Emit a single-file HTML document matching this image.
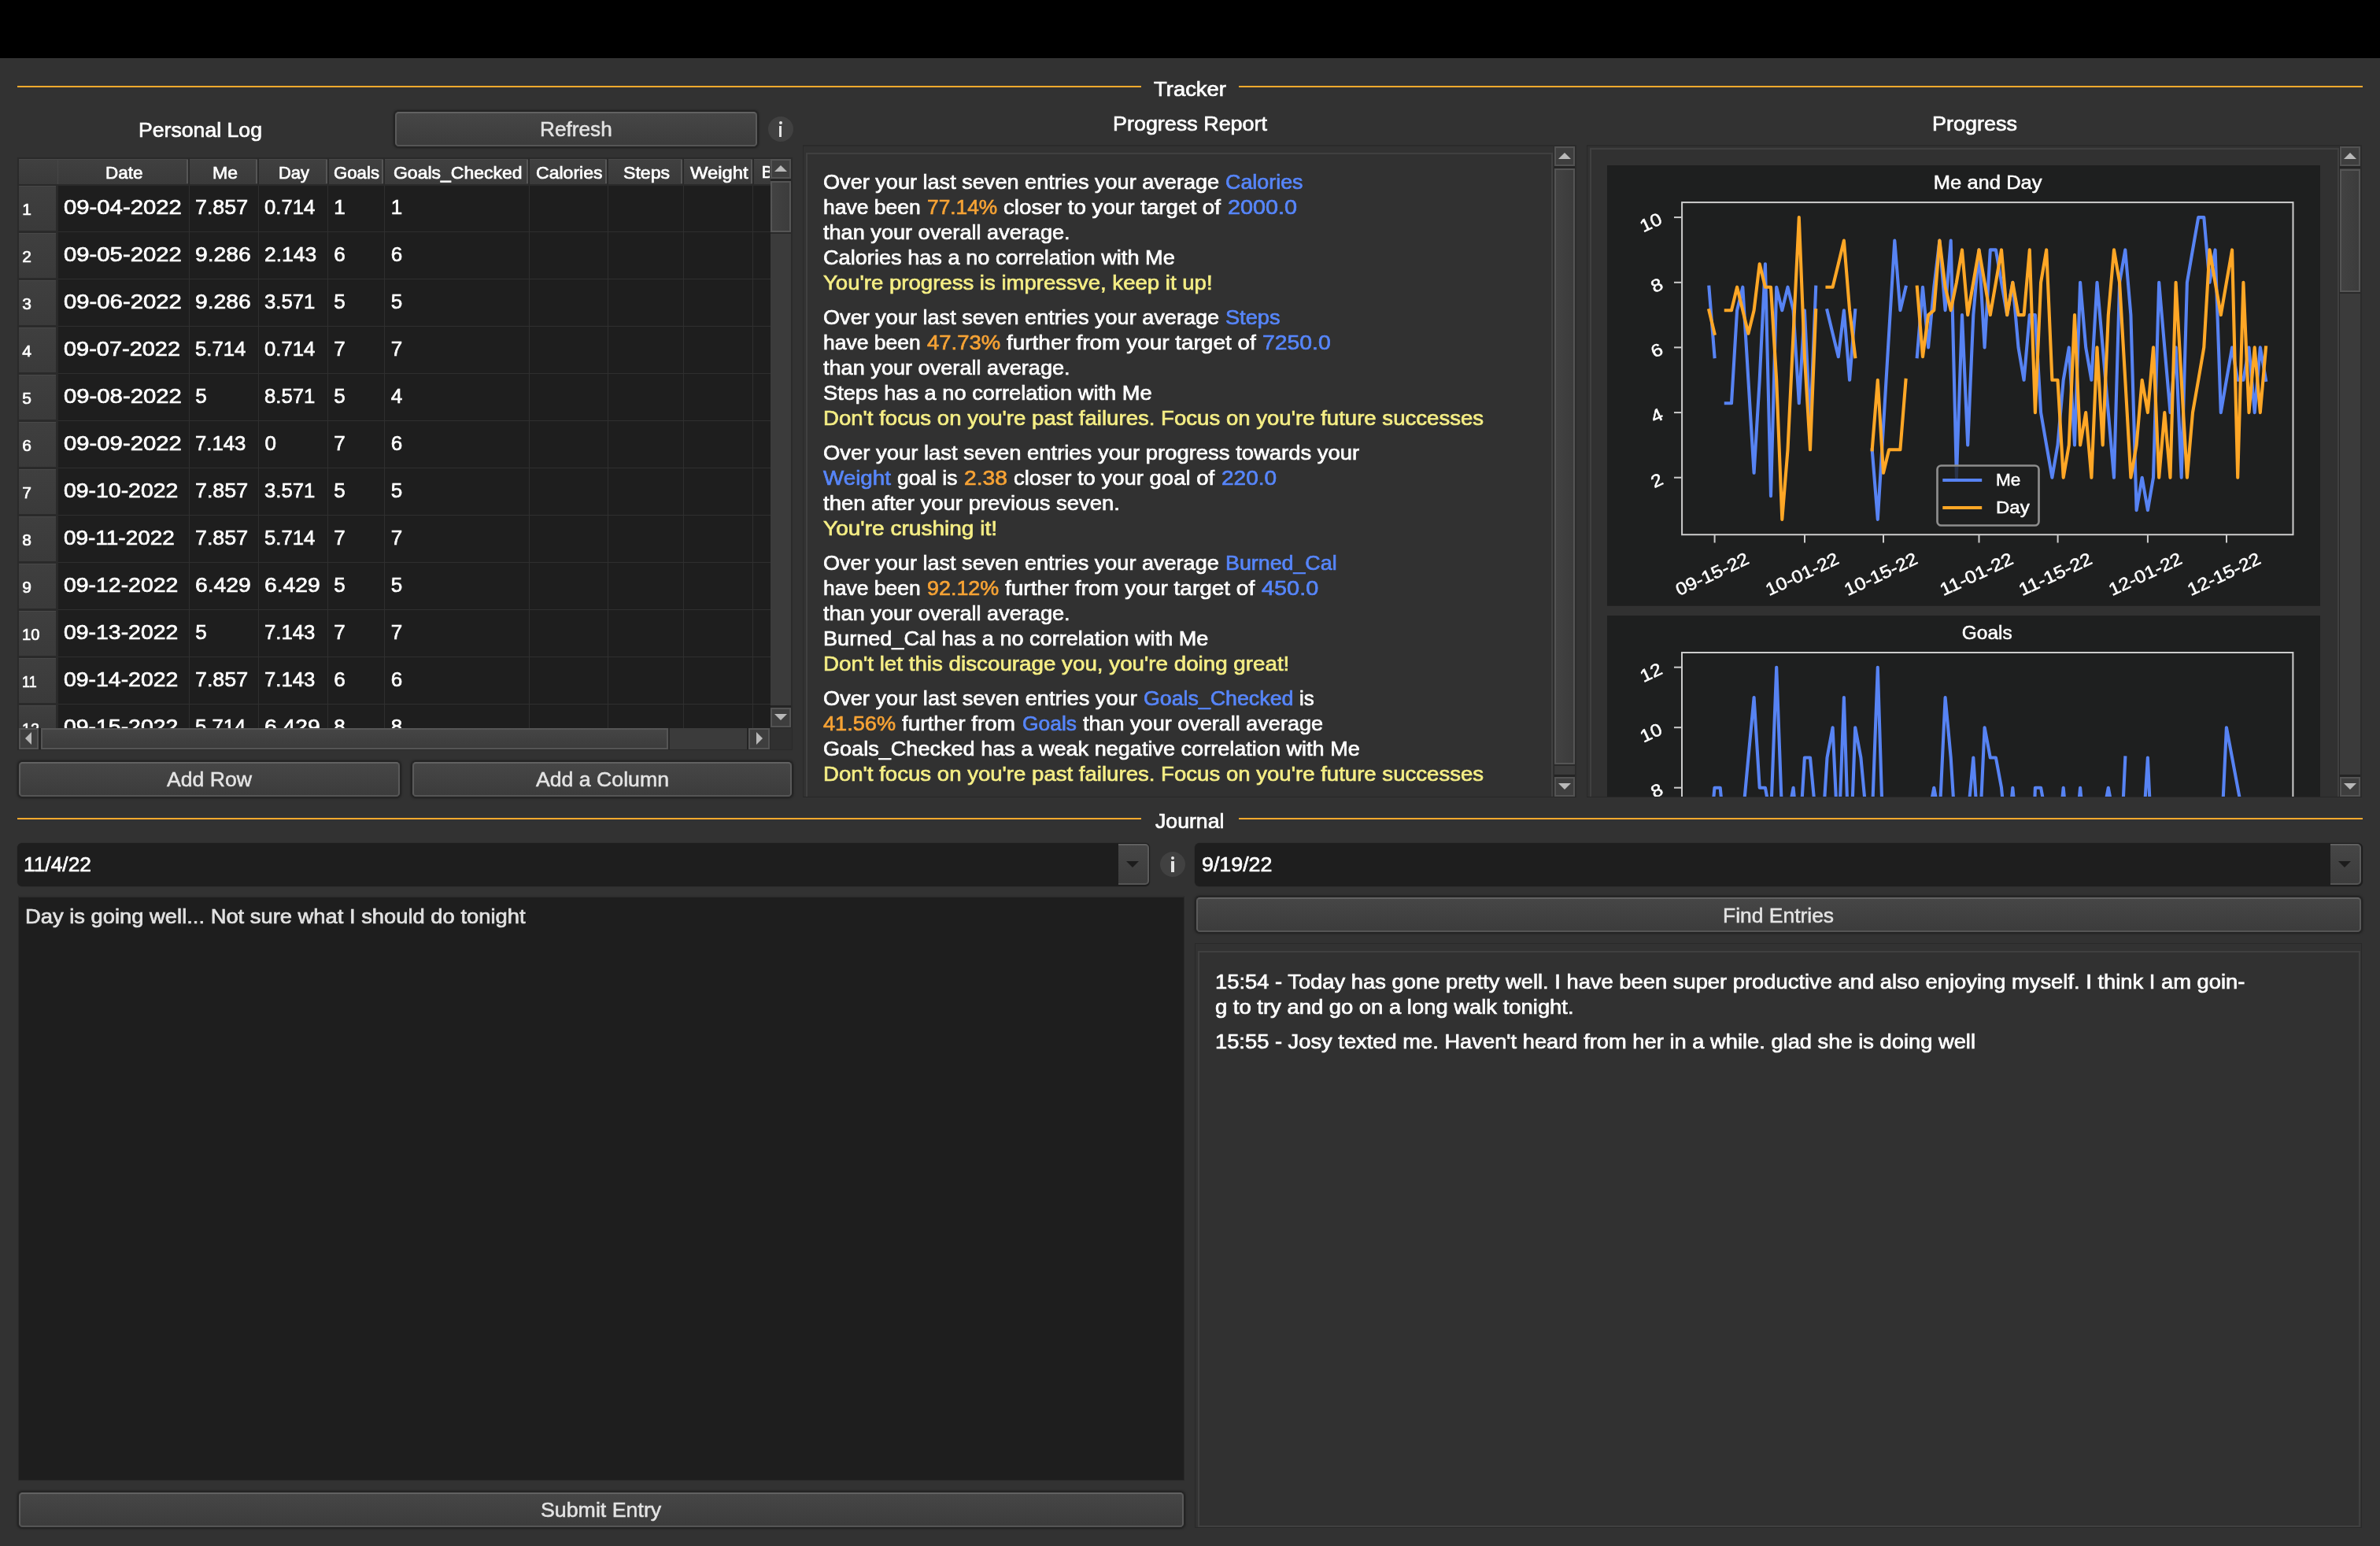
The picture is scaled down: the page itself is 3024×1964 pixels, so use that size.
<!DOCTYPE html>
<html><head><meta charset="utf-8"><title>Tracker</title>
<style>
html,body{margin:0;padding:0;}
body{width:3024px;height:1964px;background:#323232;overflow:hidden;position:relative;font-family:"Liberation Sans",sans-serif;color:#fff;}
div,span.t,svg{position:absolute;box-sizing:border-box;}
span.t{white-space:pre;transform-origin:0 50%;-webkit-text-stroke:0.68px;}
#root{left:0;top:0;width:3024px;height:1964px;will-change:transform;}
.btn{border-radius:4.5px;background:linear-gradient(#464646,#3c3c3c);border:2px solid #5a5a5a;border-top-color:#626262;border-bottom-color:#555;box-shadow:0 0 0 1.8px #242424,0 0 1.5px 2.3px #2a2a2a;}
.hl{background:#fbaa2d;height:2px;}
.sbtn{background:#3e3e3e;border:2px solid #535353;}
.shandle{background:linear-gradient(90deg,#424242,#3c3c3c);border:2px solid #555;}
.shandleh{background:linear-gradient(#454545,#3c3c3c);border:2px solid #555;}
.strack{background:#3b3b3b;}
.tri{width:0;height:0;border-style:solid;}
</style></head><body><div id="root">
<div style="left:0px;top:0px;width:3024px;height:74px;background:#000;"></div>
<div style="left:0px;top:74px;width:3024px;height:1px;background:#393939;"></div>
<div class="hl" style="left:22px;top:109px;width:1428px;height:2px;"></div>
<div class="hl" style="left:1574px;top:109px;width:1428px;height:2px;"></div>
<span class="t" style="left:1466.00px;top:95.50px;font-size:26px;line-height:34px;color:#fff;transform:scaleX(1.0556);">Tracker</span>
<span class="t" style="left:176.00px;top:147.60px;font-size:26px;line-height:34px;color:#fff;transform:scaleX(1.0246);">Personal Log</span>
<div class="btn" style="left:502px;top:142px;width:460px;height:44px;"></div>
<span class="t" style="left:686.15px;top:147.30px;font-size:26px;line-height:34px;color:#e4e4e4;transform:scaleX(1.0072);-webkit-text-stroke:0.5px;">Refresh</span>
<div style="left:975.8px;top:147.7px;width:32px;height:32px;border-radius:50%;background:#414141;"></div><div style="left:989.5999999999999px;top:153.5px;width:4.4px;height:4.4px;border-radius:50%;background:#e6e6e6;"></div><div style="left:990.0999999999999px;top:159.7px;width:3.4px;height:14.3px;background:#e4e4e4;"></div>
<span class="t" style="left:1414.00px;top:140.00px;font-size:26px;line-height:34px;color:#fff;transform:scaleX(1.0353);">Progress Report</span>
<span class="t" style="left:2455.00px;top:140.40px;font-size:26px;line-height:34px;color:#fff;transform:scaleX(1.038);">Progress</span>
<div style="left:22px;top:200px;width:985px;height:752.5px;background:#2a2a2a;"></div>
<div style="left:24px;top:202px;width:955px;height:32px;background:linear-gradient(#404040,#3a3a3a);border-top:1px solid #494949;"></div>
<div style="left:74px;top:236px;width:904.5px;height:688.5px;background:#1e1e1e;overflow:hidden;"><div style="left:165.5px;top:0px;width:1px;height:700px;background:#2f2f2f;"></div><div style="left:253.5px;top:0px;width:1px;height:700px;background:#2f2f2f;"></div><div style="left:342.2px;top:0px;width:1px;height:700px;background:#2f2f2f;"></div><div style="left:413.9px;top:0px;width:1px;height:700px;background:#2f2f2f;"></div><div style="left:597.7px;top:0px;width:1px;height:700px;background:#2f2f2f;"></div><div style="left:697.7px;top:0px;width:1px;height:700px;background:#2f2f2f;"></div><div style="left:794.0px;top:0px;width:1px;height:700px;background:#2f2f2f;"></div><div style="left:882.2px;top:0px;width:1px;height:700px;background:#2f2f2f;"></div><div style="left:0px;top:58px;width:905px;height:1px;background:#2f2f2f;"></div><div style="left:0px;top:118px;width:905px;height:1px;background:#2f2f2f;"></div><div style="left:0px;top:178px;width:905px;height:1px;background:#2f2f2f;"></div><div style="left:0px;top:238px;width:905px;height:1px;background:#2f2f2f;"></div><div style="left:0px;top:298px;width:905px;height:1px;background:#2f2f2f;"></div><div style="left:0px;top:358px;width:905px;height:1px;background:#2f2f2f;"></div><div style="left:0px;top:418px;width:905px;height:1px;background:#2f2f2f;"></div><div style="left:0px;top:478px;width:905px;height:1px;background:#2f2f2f;"></div><div style="left:0px;top:538px;width:905px;height:1px;background:#2f2f2f;"></div><div style="left:0px;top:598px;width:905px;height:1px;background:#2f2f2f;"></div><div style="left:0px;top:658px;width:905px;height:1px;background:#2f2f2f;"></div><div style="left:0px;top:718px;width:905px;height:1px;background:#2f2f2f;"></div><span class="t" style="left:6.60px;top:10.20px;font-size:26px;line-height:34px;color:#fff;transform:scaleX(1.1263);">09-04-2022</span><span class="t" style="left:174.30px;top:10.20px;font-size:26px;line-height:34px;color:#fff;transform:scaleX(1.0311);">7.857</span><span class="t" style="left:262.40px;top:10.20px;font-size:26px;line-height:34px;color:#fff;transform:scaleX(0.9896);">0.714</span><span class="t" style="left:350.30px;top:10.20px;font-size:26px;line-height:34px;color:#fff;">1</span><span class="t" style="left:422.70px;top:10.20px;font-size:26px;line-height:34px;color:#fff;">1</span><span class="t" style="left:6.60px;top:70.20px;font-size:26px;line-height:34px;color:#fff;transform:scaleX(1.1263);">09-05-2022</span><span class="t" style="left:174.30px;top:70.20px;font-size:26px;line-height:34px;color:#fff;transform:scaleX(1.0864);">9.286</span><span class="t" style="left:262.40px;top:70.20px;font-size:26px;line-height:34px;color:#fff;transform:scaleX(1.0172);">2.143</span><span class="t" style="left:350.30px;top:70.20px;font-size:26px;line-height:34px;color:#fff;">6</span><span class="t" style="left:422.70px;top:70.20px;font-size:26px;line-height:34px;color:#fff;">6</span><span class="t" style="left:6.60px;top:130.20px;font-size:26px;line-height:34px;color:#fff;transform:scaleX(1.1263);">09-06-2022</span><span class="t" style="left:174.30px;top:130.20px;font-size:26px;line-height:34px;color:#fff;transform:scaleX(1.0864);">9.286</span><span class="t" style="left:262.40px;top:130.20px;font-size:26px;line-height:34px;color:#fff;transform:scaleX(0.9896);">3.571</span><span class="t" style="left:350.30px;top:130.20px;font-size:26px;line-height:34px;color:#fff;">5</span><span class="t" style="left:422.70px;top:130.20px;font-size:26px;line-height:34px;color:#fff;">5</span><span class="t" style="left:6.60px;top:190.20px;font-size:26px;line-height:34px;color:#fff;transform:scaleX(1.1128);">09-07-2022</span><span class="t" style="left:174.30px;top:190.20px;font-size:26px;line-height:34px;color:#fff;transform:scaleX(0.9896);">5.714</span><span class="t" style="left:262.40px;top:190.20px;font-size:26px;line-height:34px;color:#fff;transform:scaleX(0.9896);">0.714</span><span class="t" style="left:350.30px;top:190.20px;font-size:26px;line-height:34px;color:#fff;">7</span><span class="t" style="left:422.70px;top:190.20px;font-size:26px;line-height:34px;color:#fff;">7</span><span class="t" style="left:6.60px;top:250.20px;font-size:26px;line-height:34px;color:#fff;transform:scaleX(1.1263);">09-08-2022</span><span class="t" style="left:174.30px;top:250.20px;font-size:26px;line-height:34px;color:#fff;">5</span><span class="t" style="left:262.40px;top:250.20px;font-size:26px;line-height:34px;color:#fff;transform:scaleX(0.9896);">8.571</span><span class="t" style="left:350.30px;top:250.20px;font-size:26px;line-height:34px;color:#fff;">5</span><span class="t" style="left:422.70px;top:250.20px;font-size:26px;line-height:34px;color:#fff;">4</span><span class="t" style="left:6.60px;top:310.20px;font-size:26px;line-height:34px;color:#fff;transform:scaleX(1.1263);">09-09-2022</span><span class="t" style="left:174.30px;top:310.20px;font-size:26px;line-height:34px;color:#fff;transform:scaleX(0.9896);">7.143</span><span class="t" style="left:262.40px;top:310.20px;font-size:26px;line-height:34px;color:#fff;">0</span><span class="t" style="left:350.30px;top:310.20px;font-size:26px;line-height:34px;color:#fff;">7</span><span class="t" style="left:422.70px;top:310.20px;font-size:26px;line-height:34px;color:#fff;">6</span><span class="t" style="left:6.60px;top:370.20px;font-size:26px;line-height:34px;color:#fff;transform:scaleX(1.0925);">09-10-2022</span><span class="t" style="left:174.30px;top:370.20px;font-size:26px;line-height:34px;color:#fff;transform:scaleX(1.0311);">7.857</span><span class="t" style="left:262.40px;top:370.20px;font-size:26px;line-height:34px;color:#fff;transform:scaleX(0.9896);">3.571</span><span class="t" style="left:350.30px;top:370.20px;font-size:26px;line-height:34px;color:#fff;">5</span><span class="t" style="left:422.70px;top:370.20px;font-size:26px;line-height:34px;color:#fff;">5</span><span class="t" style="left:6.60px;top:430.20px;font-size:26px;line-height:34px;color:#fff;transform:scaleX(1.0742);">09-11-2022</span><span class="t" style="left:174.30px;top:430.20px;font-size:26px;line-height:34px;color:#fff;transform:scaleX(1.0311);">7.857</span><span class="t" style="left:262.40px;top:430.20px;font-size:26px;line-height:34px;color:#fff;transform:scaleX(0.9896);">5.714</span><span class="t" style="left:350.30px;top:430.20px;font-size:26px;line-height:34px;color:#fff;">7</span><span class="t" style="left:422.70px;top:430.20px;font-size:26px;line-height:34px;color:#fff;">7</span><span class="t" style="left:6.60px;top:490.20px;font-size:26px;line-height:34px;color:#fff;transform:scaleX(1.0925);">09-12-2022</span><span class="t" style="left:174.30px;top:490.20px;font-size:26px;line-height:34px;color:#fff;transform:scaleX(1.0864);">6.429</span><span class="t" style="left:262.40px;top:490.20px;font-size:26px;line-height:34px;color:#fff;transform:scaleX(1.0864);">6.429</span><span class="t" style="left:350.30px;top:490.20px;font-size:26px;line-height:34px;color:#fff;">5</span><span class="t" style="left:422.70px;top:490.20px;font-size:26px;line-height:34px;color:#fff;">5</span><span class="t" style="left:6.60px;top:550.20px;font-size:26px;line-height:34px;color:#fff;transform:scaleX(1.0925);">09-13-2022</span><span class="t" style="left:174.30px;top:550.20px;font-size:26px;line-height:34px;color:#fff;">5</span><span class="t" style="left:262.40px;top:550.20px;font-size:26px;line-height:34px;color:#fff;transform:scaleX(0.9896);">7.143</span><span class="t" style="left:350.30px;top:550.20px;font-size:26px;line-height:34px;color:#fff;">7</span><span class="t" style="left:422.70px;top:550.20px;font-size:26px;line-height:34px;color:#fff;">7</span><span class="t" style="left:6.60px;top:610.20px;font-size:26px;line-height:34px;color:#fff;transform:scaleX(1.0925);">09-14-2022</span><span class="t" style="left:174.30px;top:610.20px;font-size:26px;line-height:34px;color:#fff;transform:scaleX(1.0311);">7.857</span><span class="t" style="left:262.40px;top:610.20px;font-size:26px;line-height:34px;color:#fff;transform:scaleX(0.9896);">7.143</span><span class="t" style="left:350.30px;top:610.20px;font-size:26px;line-height:34px;color:#fff;">6</span><span class="t" style="left:422.70px;top:610.20px;font-size:26px;line-height:34px;color:#fff;">6</span><span class="t" style="left:6.60px;top:670.20px;font-size:26px;line-height:34px;color:#fff;transform:scaleX(1.0925);">09-15-2022</span><span class="t" style="left:174.30px;top:670.20px;font-size:26px;line-height:34px;color:#fff;transform:scaleX(0.9896);">5.714</span><span class="t" style="left:262.40px;top:670.20px;font-size:26px;line-height:34px;color:#fff;transform:scaleX(1.0864);">6.429</span><span class="t" style="left:350.30px;top:670.20px;font-size:26px;line-height:34px;color:#fff;">8</span><span class="t" style="left:422.70px;top:670.20px;font-size:26px;line-height:34px;color:#fff;">8</span></div>
<div style="left:72.5px;top:203px;width:1px;height:31px;background:#464646;"></div>
<div style="left:237px;top:203px;width:1.5px;height:30px;background:#565656;"></div>
<div style="left:238.5px;top:202px;width:2.5px;height:32px;background:#2a2a2a;"></div>
<span class="t" style="left:133.75px;top:204.80px;font-size:22px;line-height:29px;color:#fff;transform:scaleX(1.0218);">Date</span>
<div style="left:325px;top:203px;width:1.5px;height:30px;background:#565656;"></div>
<div style="left:326.5px;top:202px;width:2.5px;height:32px;background:#2a2a2a;"></div>
<span class="t" style="left:269.50px;top:204.80px;font-size:22px;line-height:29px;color:#fff;transform:scaleX(1.047);">Me</span>
<div style="left:414px;top:203px;width:1.5px;height:30px;background:#565656;"></div>
<div style="left:415.5px;top:202px;width:2.5px;height:32px;background:#2a2a2a;"></div>
<span class="t" style="left:354.00px;top:204.80px;font-size:22px;line-height:29px;color:#fff;transform:scaleX(0.9968);">Day</span>
<div style="left:485px;top:203px;width:1.5px;height:30px;background:#565656;"></div>
<div style="left:486.5px;top:202px;width:2.5px;height:32px;background:#2a2a2a;"></div>
<span class="t" style="left:424.40px;top:204.80px;font-size:22px;line-height:29px;color:#fff;transform:scaleX(1.009);">Goals</span>
<div style="left:669px;top:203px;width:1.5px;height:30px;background:#565656;"></div>
<div style="left:670.5px;top:202px;width:2.5px;height:32px;background:#2a2a2a;"></div>
<span class="t" style="left:499.95px;top:204.80px;font-size:22px;line-height:29px;color:#fff;transform:scaleX(1.0444);">Goals_Checked</span>
<div style="left:769px;top:203px;width:1.5px;height:30px;background:#565656;"></div>
<div style="left:770.5px;top:202px;width:2.5px;height:32px;background:#2a2a2a;"></div>
<span class="t" style="left:681.40px;top:204.80px;font-size:22px;line-height:29px;color:#fff;transform:scaleX(1.0483);">Calories</span>
<div style="left:865px;top:203px;width:1.5px;height:30px;background:#565656;"></div>
<div style="left:866.5px;top:202px;width:2.5px;height:32px;background:#2a2a2a;"></div>
<span class="t" style="left:792.00px;top:204.80px;font-size:22px;line-height:29px;color:#fff;transform:scaleX(1.0486);">Steps</span>
<div style="left:954px;top:203px;width:1.5px;height:30px;background:#565656;"></div>
<div style="left:955.5px;top:202px;width:2.5px;height:32px;background:#2a2a2a;"></div>
<span class="t" style="left:876.95px;top:204.80px;font-size:22px;line-height:29px;color:#fff;transform:scaleX(1.0796);">Weight</span>
<div style="left:967.7px;top:202px;width:10.6px;height:32px;overflow:hidden;"><span class="t" style="left:0.00px;top:2.30px;font-size:22px;line-height:29px;color:#fff;">B</span></div>
<div style="left:24px;top:236px;width:47px;height:57px;background:linear-gradient(#3f3f3f,#3a3a3a);border-top:1px solid #484848;"></div>
<span class="t" style="left:28.30px;top:251.70px;font-size:21px;line-height:27px;color:#fff;">1</span>
<div style="left:24px;top:296px;width:47px;height:57px;background:linear-gradient(#3f3f3f,#3a3a3a);border-top:1px solid #484848;"></div>
<span class="t" style="left:28.30px;top:311.70px;font-size:21px;line-height:27px;color:#fff;">2</span>
<div style="left:24px;top:356px;width:47px;height:57px;background:linear-gradient(#3f3f3f,#3a3a3a);border-top:1px solid #484848;"></div>
<span class="t" style="left:28.30px;top:371.70px;font-size:21px;line-height:27px;color:#fff;">3</span>
<div style="left:24px;top:416px;width:47px;height:57px;background:linear-gradient(#3f3f3f,#3a3a3a);border-top:1px solid #484848;"></div>
<span class="t" style="left:28.30px;top:431.70px;font-size:21px;line-height:27px;color:#fff;">4</span>
<div style="left:24px;top:476px;width:47px;height:57px;background:linear-gradient(#3f3f3f,#3a3a3a);border-top:1px solid #484848;"></div>
<span class="t" style="left:28.30px;top:491.70px;font-size:21px;line-height:27px;color:#fff;">5</span>
<div style="left:24px;top:536px;width:47px;height:57px;background:linear-gradient(#3f3f3f,#3a3a3a);border-top:1px solid #484848;"></div>
<span class="t" style="left:28.30px;top:551.70px;font-size:21px;line-height:27px;color:#fff;">6</span>
<div style="left:24px;top:596px;width:47px;height:57px;background:linear-gradient(#3f3f3f,#3a3a3a);border-top:1px solid #484848;"></div>
<span class="t" style="left:28.30px;top:611.70px;font-size:21px;line-height:27px;color:#fff;">7</span>
<div style="left:24px;top:656px;width:47px;height:57px;background:linear-gradient(#3f3f3f,#3a3a3a);border-top:1px solid #484848;"></div>
<span class="t" style="left:28.30px;top:671.70px;font-size:21px;line-height:27px;color:#fff;">8</span>
<div style="left:24px;top:716px;width:47px;height:57px;background:linear-gradient(#3f3f3f,#3a3a3a);border-top:1px solid #484848;"></div>
<span class="t" style="left:28.30px;top:731.70px;font-size:21px;line-height:27px;color:#fff;">9</span>
<div style="left:24px;top:776px;width:47px;height:57px;background:linear-gradient(#3f3f3f,#3a3a3a);border-top:1px solid #484848;"></div>
<span class="t" style="left:28.00px;top:791.70px;font-size:21px;line-height:27px;color:#fff;transform:scaleX(0.9632);">10</span>
<div style="left:24px;top:836px;width:47px;height:57px;background:linear-gradient(#3f3f3f,#3a3a3a);border-top:1px solid #484848;"></div>
<span class="t" style="left:28.00px;top:851.70px;font-size:21px;line-height:27px;color:#fff;transform:scaleX(0.8527);">11</span>
<div style="left:24px;top:896px;width:47px;height:28.5px;background:linear-gradient(#3f3f3f,#3a3a3a);border-top:1px solid #484848;"></div>
<div style="left:24px;top:896px;width:48px;height:28.5px;overflow:hidden;"><span class="t" style="left:4.00px;top:15.70px;font-size:21px;line-height:27px;color:#fff;transform:scaleX(0.9418);">12</span></div>
<div class="strack" style="left:979px;top:202px;width:26px;height:721.5px;"></div><div class="sbtn" style="left:979px;top:202px;width:26px;height:25px;"></div><div class="tri" style="left:984.0px;top:210.0px;border-width:0 8.0px 8px 8.0px;border-color:transparent transparent #b9b9b9 transparent;"></div><div style="left:979px;top:227px;width:26px;height:2.5px;background:#242424;"></div><div class="sbtn" style="left:979px;top:898.5px;width:26px;height:25px;"></div><div class="tri" style="left:984.0px;top:907.0px;border-width:8px 8.0px 0 8.0px;border-color:#b9b9b9 transparent transparent transparent;"></div><div style="left:979px;top:896.0px;width:26px;height:2.5px;background:#242424;"></div><div class="shandle" style="left:979px;top:229.5px;width:26px;height:65.5px;"></div><div style="left:979px;top:295px;width:26px;height:2px;background:#2a2a2a;"></div>
<div class="strack" style="left:24px;top:925px;width:954px;height:26.5px;"></div>
<div class="sbtn" style="left:24px;top:925px;width:25px;height:26.5px;"></div><div class="tri" style="left:32.3px;top:930.3px;border-width:8.0px 8px 8.0px 0;border-color:transparent #b9b9b9 transparent transparent;"></div>
<div style="left:49px;top:925px;width:2.5px;height:26.5px;background:#242424;"></div>
<div class="sbtn" style="left:951px;top:925px;width:27px;height:26.5px;"></div><div class="tri" style="left:961.0px;top:930.3px;border-width:8.0px 0 8.0px 8px;border-color:transparent transparent transparent #b9b9b9;"></div>
<div style="left:948.5px;top:925px;width:2.5px;height:26.5px;background:#242424;"></div>
<div class="shandleh" style="left:52px;top:925px;width:796.7px;height:26.5px;"></div>
<div style="left:848.7px;top:925px;width:2px;height:26.5px;background:#2a2a2a;"></div>
<div style="left:979px;top:925px;width:27px;height:26.5px;background:#303030;"></div>
<div class="btn" style="left:24px;top:968px;width:484px;height:44px;"></div>
<span class="t" style="left:212.00px;top:973.30px;font-size:26px;line-height:34px;color:#e4e4e4;transform:scaleX(1.0237);-webkit-text-stroke:0.5px;">Add Row</span>
<div class="btn" style="left:524px;top:968px;width:482px;height:44px;"></div>
<span class="t" style="left:680.50px;top:973.30px;font-size:26px;line-height:34px;color:#e4e4e4;transform:scaleX(1.0257);-webkit-text-stroke:0.5px;">Add a Column</span>
<div style="left:1020px;top:184px;width:983px;height:828.5px;border:1px solid #292929;border-top:2px solid #2b2b2b;border-right:2px solid #2b2b2b;border-bottom:none;background:#323232;"></div>
<div style="left:1024px;top:194px;width:949px;height:818.5px;border:2px solid #404040;border-bottom:none;background:#313131;"></div>
<div style="left:1020px;top:1011.5px;width:983px;height:1px;background:#272727;"></div>
<div style="left:1974px;top:186px;width:1px;height:825.5px;background:#282828;"></div>
<div class="strack" style="left:1975px;top:186px;width:26px;height:825.5px;"></div><div class="sbtn" style="left:1975px;top:186px;width:26px;height:25px;"></div><div class="tri" style="left:1980.0px;top:194.0px;border-width:0 8.0px 8px 8.0px;border-color:transparent transparent #b9b9b9 transparent;"></div><div style="left:1975px;top:211px;width:26px;height:2.5px;background:#242424;"></div><div class="sbtn" style="left:1975px;top:986.5px;width:26px;height:25px;"></div><div class="tri" style="left:1980.0px;top:995.0px;border-width:8px 8.0px 0 8.0px;border-color:#b9b9b9 transparent transparent transparent;"></div><div style="left:1975px;top:984.0px;width:26px;height:2.5px;background:#242424;"></div><div class="shandle" style="left:1975px;top:213.5px;width:26px;height:757.5px;"></div><div style="left:1975px;top:971px;width:26px;height:2px;background:#2a2a2a;"></div>
<span class="t" style="left:1045.50px;top:215.30px;font-size:26px;line-height:32px;color:#ffffff;transform:scaleX(1.0425);">Over your last seven entries your average</span>
<span class="t" style="left:1557.10px;top:215.30px;font-size:26px;line-height:32px;color:#5786fb;transform:scaleX(1.0328);">Calories</span>
<span class="t" style="left:1045.50px;top:247.30px;font-size:26px;line-height:32px;color:#ffffff;transform:scaleX(1.0193);">have been</span>
<span class="t" style="left:1177.70px;top:247.30px;font-size:26px;line-height:32px;color:#f7a335;transform:scaleX(1.0115);">77.14%</span>
<span class="t" style="left:1275.30px;top:247.30px;font-size:26px;line-height:32px;color:#ffffff;transform:scaleX(1.0669);">closer to your target of</span>
<span class="t" style="left:1559.70px;top:247.30px;font-size:26px;line-height:32px;color:#5786fb;transform:scaleX(1.1052);">2000.0</span>
<span class="t" style="left:1045.50px;top:279.30px;font-size:26px;line-height:32px;color:#ffffff;transform:scaleX(1.0432);">than your overall average.</span>
<span class="t" style="left:1045.50px;top:311.30px;font-size:26px;line-height:32px;color:#ffffff;transform:scaleX(1.0445);">Calories has a no correlation with Me</span>
<span class="t" style="left:1045.50px;top:343.30px;font-size:26px;line-height:32px;color:#f5ee85;transform:scaleX(1.0603);">You're progress is impressve, keep it up!</span>
<span class="t" style="left:1045.50px;top:387.30px;font-size:26px;line-height:32px;color:#ffffff;transform:scaleX(1.0425);">Over your last seven entries your average</span>
<span class="t" style="left:1557.10px;top:387.30px;font-size:26px;line-height:32px;color:#5786fb;transform:scaleX(1.0451);">Steps</span>
<span class="t" style="left:1045.50px;top:419.30px;font-size:26px;line-height:32px;color:#ffffff;transform:scaleX(1.0185);">have been</span>
<span class="t" style="left:1177.60px;top:419.30px;font-size:26px;line-height:32px;color:#f7a335;transform:scaleX(1.0568);">47.73%</span>
<span class="t" style="left:1279.20px;top:419.30px;font-size:26px;line-height:32px;color:#ffffff;transform:scaleX(1.0746);">further from your target of</span>
<span class="t" style="left:1604.40px;top:419.30px;font-size:26px;line-height:32px;color:#5786fb;transform:scaleX(1.0901);">7250.0</span>
<span class="t" style="left:1045.50px;top:451.30px;font-size:26px;line-height:32px;color:#ffffff;transform:scaleX(1.0432);">than your overall average.</span>
<span class="t" style="left:1045.50px;top:483.30px;font-size:26px;line-height:32px;color:#ffffff;transform:scaleX(1.0469);">Steps has a no correlation with Me</span>
<span class="t" style="left:1045.50px;top:515.30px;font-size:26px;line-height:32px;color:#f5ee85;transform:scaleX(1.0609);">Don't focus on you're past failures. Focus on you're future successes</span>
<span class="t" style="left:1045.50px;top:559.30px;font-size:26px;line-height:32px;color:#ffffff;transform:scaleX(1.0544);">Over your last seven entries your progress towards your</span>
<span class="t" style="left:1045.50px;top:591.30px;font-size:26px;line-height:32px;color:#5786fb;transform:scaleX(1.0689);">Weight</span>
<span class="t" style="left:1139.90px;top:591.30px;font-size:26px;line-height:32px;color:#ffffff;transform:scaleX(1.0165);">goal is</span>
<span class="t" style="left:1224.70px;top:591.30px;font-size:26px;line-height:32px;color:#f7a335;transform:scaleX(1.0848);">2.38</span>
<span class="t" style="left:1288.00px;top:591.30px;font-size:26px;line-height:32px;color:#ffffff;transform:scaleX(1.0569);">closer to your goal of</span>
<span class="t" style="left:1551.50px;top:591.30px;font-size:26px;line-height:32px;color:#5786fb;transform:scaleX(1.0772);">220.0</span>
<span class="t" style="left:1045.50px;top:623.30px;font-size:26px;line-height:32px;color:#ffffff;transform:scaleX(1.0558);">then after your previous seven.</span>
<span class="t" style="left:1045.50px;top:655.30px;font-size:26px;line-height:32px;color:#f5ee85;transform:scaleX(1.079);">You're crushing it!</span>
<span class="t" style="left:1045.50px;top:699.30px;font-size:26px;line-height:32px;color:#ffffff;transform:scaleX(1.0417);">Over your last seven entries your average</span>
<span class="t" style="left:1556.70px;top:699.30px;font-size:26px;line-height:32px;color:#5786fb;transform:scaleX(1.0312);">Burned_Cal</span>
<span class="t" style="left:1045.50px;top:731.30px;font-size:26px;line-height:32px;color:#ffffff;transform:scaleX(1.0177);">have been</span>
<span class="t" style="left:1177.50px;top:731.30px;font-size:26px;line-height:32px;color:#f7a335;transform:scaleX(1.0342);">92.12%</span>
<span class="t" style="left:1277.10px;top:731.30px;font-size:26px;line-height:32px;color:#ffffff;transform:scaleX(1.076);">further from your target of</span>
<span class="t" style="left:1602.70px;top:731.30px;font-size:26px;line-height:32px;color:#5786fb;transform:scaleX(1.1094);">450.0</span>
<span class="t" style="left:1045.50px;top:763.30px;font-size:26px;line-height:32px;color:#ffffff;transform:scaleX(1.0432);">than your overall average.</span>
<span class="t" style="left:1045.50px;top:795.30px;font-size:26px;line-height:32px;color:#ffffff;transform:scaleX(1.0419);">Burned_Cal has a no correlation with Me</span>
<span class="t" style="left:1045.50px;top:827.30px;font-size:26px;line-height:32px;color:#f5ee85;transform:scaleX(1.0676);">Don't let this discourage you, you're doing great!</span>
<span class="t" style="left:1045.50px;top:871.30px;font-size:26px;line-height:32px;color:#ffffff;transform:scaleX(1.0451);">Over your last seven entries your</span>
<span class="t" style="left:1452.60px;top:871.30px;font-size:26px;line-height:32px;color:#5786fb;transform:scaleX(1.0292);">Goals_Checked</span>
<span class="t" style="left:1651.40px;top:871.30px;font-size:26px;line-height:32px;color:#ffffff;transform:scaleX(0.9957);">is</span>
<span class="t" style="left:1045.50px;top:903.30px;font-size:26px;line-height:32px;color:#f7a335;transform:scaleX(1.0444);">41.56%</span>
<span class="t" style="left:1146.00px;top:903.30px;font-size:26px;line-height:32px;color:#ffffff;transform:scaleX(1.0724);">further from</span>
<span class="t" style="left:1298.50px;top:903.30px;font-size:26px;line-height:32px;color:#5786fb;transform:scaleX(1.0159);">Goals</span>
<span class="t" style="left:1375.90px;top:903.30px;font-size:26px;line-height:32px;color:#ffffff;transform:scaleX(1.0395);">than your overall average</span>
<span class="t" style="left:1045.50px;top:935.30px;font-size:26px;line-height:32px;color:#ffffff;transform:scaleX(1.0414);">Goals_Checked has a weak negative correlation with Me</span>
<span class="t" style="left:1045.50px;top:967.30px;font-size:26px;line-height:32px;color:#f5ee85;transform:scaleX(1.0609);">Don't focus on you're past failures. Focus on you're future successes</span>
<div style="left:2016px;top:184px;width:985px;height:828.5px;border:1px solid #292929;border-top:2px solid #2b2b2b;border-right:2px solid #2b2b2b;border-bottom:none;background:#323232;"></div>
<div style="left:2020px;top:188px;width:951.5px;height:824.5px;border:2px solid #404040;border-bottom:none;background:#313131;"></div>
<div style="left:2016px;top:1011.5px;width:985px;height:1px;background:#272727;"></div>
<div style="left:2972px;top:186px;width:1px;height:825.5px;background:#282828;"></div>
<div class="strack" style="left:2973px;top:186px;width:26px;height:825.5px;"></div><div class="sbtn" style="left:2973px;top:186px;width:26px;height:25px;"></div><div class="tri" style="left:2978.0px;top:194.0px;border-width:0 8.0px 8px 8.0px;border-color:transparent transparent #b9b9b9 transparent;"></div><div style="left:2973px;top:211px;width:26px;height:2.5px;background:#242424;"></div><div class="sbtn" style="left:2973px;top:986.5px;width:26px;height:25px;"></div><div class="tri" style="left:2978.0px;top:995.0px;border-width:8px 8.0px 0 8.0px;border-color:#b9b9b9 transparent transparent transparent;"></div><div style="left:2973px;top:984.0px;width:26px;height:2.5px;background:#242424;"></div><div class="shandle" style="left:2973px;top:215px;width:26px;height:156px;"></div><div style="left:2973px;top:371px;width:26px;height:2px;background:#2a2a2a;"></div>
<svg style="left:2022px;top:190px;will-change:transform;" width="949" height="821.5" viewBox="2022 190 949 821.5"><rect x="2042" y="210" width="906" height="559.7" fill="#1e1f1f"/><rect x="2042" y="782" width="906" height="300" fill="#1e1f1f"/><defs><clipPath id="c1"><rect x="2137.1" y="257.1" width="776.4" height="422"/></clipPath><clipPath id="c2"><rect x="2137" y="829" width="776.4" height="400"/></clipPath></defs><g clip-path="url(#c1)" fill="none" stroke-width="4.1" stroke-linejoin="round" stroke-linecap="square"><path d="M2171.4,364.7 L2178.5,453.2 M2192.8,512.3 L2200.0,512.3 L2207.1,394.2 L2214.3,364.7 L2221.4,482.8 L2228.6,600.8 L2235.7,482.8 L2242.9,335.2 L2250.0,630.3 L2257.2,364.7 L2264.3,394.2 L2271.5,364.7 L2278.6,394.2 L2285.8,512.3 L2292.9,394.2 L2300.0,541.8 L2307.2,364.7 M2321.5,394.2 L2328.6,423.7 L2335.8,453.2 L2342.9,394.2 L2350.1,482.8 L2357.2,394.2 M2378.7,571.3 L2385.8,659.9 L2393.0,541.8 L2400.1,423.7 L2407.3,305.6 L2414.4,394.2 L2421.5,364.7 M2435.8,453.2 L2443.0,364.7 L2450.1,441.4 L2457.3,364.7 L2464.4,305.6 L2471.6,394.2 L2478.7,305.6 L2485.9,606.7 L2493.0,400.1 L2500.2,565.4 L2507.3,400.1 L2514.5,317.4 L2521.6,441.4 L2528.8,317.4 L2535.9,317.4 L2543.0,358.8 L2550.2,400.1 L2557.3,358.8 L2564.5,441.4 L2571.6,482.8 L2578.8,400.1 L2585.9,400.1 L2593.1,524.1 L2600.2,565.4 L2607.4,606.7 L2614.5,565.4 L2621.7,482.8 L2628.8,441.4 L2636.0,565.4 L2643.1,358.8 L2650.2,441.4 L2657.4,482.8 L2664.5,358.8 L2671.7,441.4 L2678.8,524.1 L2686.0,606.7 L2693.1,358.8 L2700.3,317.4 L2707.4,400.1 L2714.6,648.1 L2721.7,606.7 L2728.9,648.1 L2736.0,606.7 L2743.2,358.8 L2750.3,441.4 L2757.5,524.1 L2764.6,441.4 L2771.7,606.7 L2778.9,358.8 L2786.0,317.4 L2793.2,276.1 L2800.3,276.1 L2807.5,358.8 L2814.6,317.4 L2821.8,524.1 L2828.9,482.8 L2836.1,441.4 L2843.2,482.8 L2850.4,482.8 L2857.5,441.4 L2864.7,524.1 L2871.8,441.4 L2879.0,482.8" stroke="#5783f3"/><path d="M2171.4,394.2 L2178.5,423.7 M2192.8,394.2 L2200.0,394.2 L2207.1,364.7 L2214.3,394.2 L2221.4,423.7 L2228.6,394.2 L2235.7,335.2 L2242.9,364.7 L2250.0,364.7 L2257.2,482.8 L2264.3,659.9 L2271.5,571.3 L2278.6,423.7 L2285.8,276.1 L2292.9,453.2 L2300.0,571.3 L2307.2,394.2 M2321.5,364.7 L2328.6,364.7 L2335.8,335.2 L2342.9,305.6 L2350.1,394.2 L2357.2,453.2 M2378.7,571.3 L2385.8,482.8 L2393.0,600.8 L2400.1,571.3 L2407.3,571.3 L2414.4,571.3 L2421.5,482.8 M2435.8,364.7 L2443.0,453.2 L2450.1,400.1 L2457.3,394.2 L2464.4,305.6 L2471.6,364.7 L2478.7,394.2 L2485.9,358.8 L2493.0,317.4 L2500.2,400.1 L2507.3,358.8 L2514.5,317.4 L2521.6,358.8 L2528.8,400.1 L2535.9,358.8 L2543.0,317.4 L2550.2,400.1 L2557.3,358.8 L2564.5,400.1 L2571.6,400.1 L2578.8,317.4 L2585.9,524.1 L2593.1,358.8 L2600.2,317.4 L2607.4,482.8 L2614.5,482.8 L2621.7,606.7 L2628.8,565.4 L2636.0,400.1 L2643.1,565.4 L2650.2,524.1 L2657.4,606.7 L2664.5,441.4 L2671.7,565.4 L2678.8,400.1 L2686.0,317.4 L2693.1,358.8 L2700.3,482.8 L2707.4,606.7 L2714.6,565.4 L2721.7,482.8 L2728.9,524.1 L2736.0,441.4 L2743.2,606.7 L2750.3,524.1 L2757.5,606.7 L2764.6,358.8 L2771.7,482.8 L2778.9,606.7 L2786.0,524.1 L2793.2,482.8 L2800.3,441.4 L2807.5,317.4 L2814.6,358.8 L2821.8,400.1 L2828.9,358.8 L2836.1,317.4 L2843.2,606.7 L2850.4,358.8 L2857.5,524.1 L2864.7,441.4 L2871.8,524.1 L2879.0,441.4" stroke="#ffa726"/></g><rect x="2137.1" y="257.1" width="776.4" height="422.1" fill="none" stroke="#cdcdcd" stroke-width="2"/><g stroke="#cdcdcd" stroke-width="2"><line x1="2178.6" y1="680" x2="2178.6" y2="689.5"/><line x1="2293" y1="680" x2="2293" y2="689.5"/><line x1="2393" y1="680" x2="2393" y2="689.5"/><line x1="2514.5" y1="680" x2="2514.5" y2="689.5"/><line x1="2614.6" y1="680" x2="2614.6" y2="689.5"/><line x1="2728.9" y1="680" x2="2728.9" y2="689.5"/><line x1="2829" y1="680" x2="2829" y2="689.5"/><line x1="2127" y1="606.7" x2="2136.2" y2="606.7"/><line x1="2127" y1="524.1" x2="2136.2" y2="524.1"/><line x1="2127" y1="441.4" x2="2136.2" y2="441.4"/><line x1="2127" y1="358.8" x2="2136.2" y2="358.8"/><line x1="2127" y1="276.1" x2="2136.2" y2="276.1"/><line x1="2127" y1="1000.7" x2="2136.2" y2="1000.7"/><line x1="2127" y1="924.2" x2="2136.2" y2="924.2"/><line x1="2127" y1="847.7" x2="2136.2" y2="847.7"/></g><text x="2178.6" y="736.3" font-size="22.4" font-family="Liberation Sans, sans-serif" fill="#fff" stroke="#fff" stroke-width="0.5" text-anchor="middle" textLength="99.6" lengthAdjust="spacingAndGlyphs" transform="rotate(-25 2178.6 736.3)">09-15-22</text><text x="2293.0" y="736.3" font-size="22.4" font-family="Liberation Sans, sans-serif" fill="#fff" stroke="#fff" stroke-width="0.5" text-anchor="middle" textLength="99.6" lengthAdjust="spacingAndGlyphs" transform="rotate(-25 2293.0 736.3)">10-01-22</text><text x="2393.0" y="736.3" font-size="22.4" font-family="Liberation Sans, sans-serif" fill="#fff" stroke="#fff" stroke-width="0.5" text-anchor="middle" textLength="99.6" lengthAdjust="spacingAndGlyphs" transform="rotate(-25 2393.0 736.3)">10-15-22</text><text x="2514.5" y="736.3" font-size="22.4" font-family="Liberation Sans, sans-serif" fill="#fff" stroke="#fff" stroke-width="0.5" text-anchor="middle" textLength="99.6" lengthAdjust="spacingAndGlyphs" transform="rotate(-25 2514.5 736.3)">11-01-22</text><text x="2614.6" y="736.3" font-size="22.4" font-family="Liberation Sans, sans-serif" fill="#fff" stroke="#fff" stroke-width="0.5" text-anchor="middle" textLength="99.6" lengthAdjust="spacingAndGlyphs" transform="rotate(-25 2614.6 736.3)">11-15-22</text><text x="2728.9" y="736.3" font-size="22.4" font-family="Liberation Sans, sans-serif" fill="#fff" stroke="#fff" stroke-width="0.5" text-anchor="middle" textLength="99.6" lengthAdjust="spacingAndGlyphs" transform="rotate(-25 2728.9 736.3)">12-01-22</text><text x="2829.0" y="736.3" font-size="22.4" font-family="Liberation Sans, sans-serif" fill="#fff" stroke="#fff" stroke-width="0.5" text-anchor="middle" textLength="99.6" lengthAdjust="spacingAndGlyphs" transform="rotate(-25 2829.0 736.3)">12-15-22</text><text x="2108.3" y="617.3" font-size="22.4" font-family="Liberation Sans, sans-serif" fill="#fff" stroke="#fff" stroke-width="0.5" text-anchor="middle" textLength="14" lengthAdjust="spacingAndGlyphs" transform="rotate(-25 2108.3 617.3)">2</text><text x="2108.3" y="534.7" font-size="22.4" font-family="Liberation Sans, sans-serif" fill="#fff" stroke="#fff" stroke-width="0.5" text-anchor="middle" textLength="14" lengthAdjust="spacingAndGlyphs" transform="rotate(-25 2108.3 534.7)">4</text><text x="2108.3" y="452.0" font-size="22.4" font-family="Liberation Sans, sans-serif" fill="#fff" stroke="#fff" stroke-width="0.5" text-anchor="middle" textLength="14" lengthAdjust="spacingAndGlyphs" transform="rotate(-25 2108.3 452.0)">6</text><text x="2108.3" y="369.4" font-size="22.4" font-family="Liberation Sans, sans-serif" fill="#fff" stroke="#fff" stroke-width="0.5" text-anchor="middle" textLength="14" lengthAdjust="spacingAndGlyphs" transform="rotate(-25 2108.3 369.4)">8</text><text x="2100.7" y="289.5" font-size="22.4" font-family="Liberation Sans, sans-serif" fill="#fff" stroke="#fff" stroke-width="0.5" text-anchor="middle" textLength="28" lengthAdjust="spacingAndGlyphs" transform="rotate(-25 2100.7 289.5)">10</text><text x="2525.7" y="240.0" font-size="23.5" font-family="Liberation Sans, sans-serif" fill="#fff" stroke="#fff" stroke-width="0.5" text-anchor="middle" textLength="137.8" lengthAdjust="spacingAndGlyphs">Me and Day</text><rect x="2461.5" y="591.5" width="129" height="76" rx="5" fill="#1e1f1f" fill-opacity="0.8" stroke="#8d8d8d" stroke-width="2.7"/><line x1="2468.3" y1="610" x2="2518.2" y2="610" stroke="#5783f3" stroke-width="4.1"/><line x1="2468.3" y1="645" x2="2518.2" y2="645" stroke="#ffa726" stroke-width="4.1"/><text x="2536.0" y="616.8" font-size="21.3" font-family="Liberation Sans, sans-serif" fill="#fff" stroke="#fff" stroke-width="0.5" text-anchor="start" textLength="31.4" lengthAdjust="spacingAndGlyphs">Me</text><text x="2536.0" y="651.9" font-size="21.3" font-family="Liberation Sans, sans-serif" fill="#fff" stroke="#fff" stroke-width="0.5" text-anchor="start" textLength="42.7" lengthAdjust="spacingAndGlyphs">Day</text><g clip-path="url(#c2)" fill="none" stroke-width="4.1" stroke-linejoin="round" stroke-linecap="square"><path d="M2171.4,1077.2 L2178.5,1000.7 L2185.7,1000.7 L2192.8,1077.2 L2200.0,1077.2 L2207.1,1077.2 L2214.3,1039.0 L2221.4,962.5 L2228.6,886.0 L2235.7,1000.7 L2242.9,1000.7 L2250.0,1039.0 L2257.2,847.7 L2264.3,1039.0 L2271.5,1039.0 L2278.6,1000.7 L2285.8,1077.2 L2292.9,962.5 L2300.0,962.5 L2307.2,1039.0 L2314.3,1077.2 L2321.5,962.5 L2328.6,924.2 L2335.8,1077.2 L2342.9,886.0 L2350.1,1115.5 L2357.2,924.2 L2364.4,962.5 L2371.5,1039.0 L2378.7,1039.0 L2385.8,847.7 L2393.0,1077.2 L2400.1,1077.2 L2407.3,1077.2 L2414.4,1077.2 L2421.5,1077.2 L2428.7,1077.2 L2435.8,1077.2 L2443.0,1077.2 L2450.1,1039.0 L2457.3,1000.7 L2464.4,1039.0 L2471.6,886.0 L2478.7,962.5 L2485.9,1077.2 L2493.0,1077.2 L2500.2,1039.0 L2507.3,962.5 L2514.5,1077.2 L2521.6,924.2 L2528.8,962.5 L2535.9,962.5 L2543.0,1000.7 L2550.2,1077.2 L2557.3,1000.7 L2564.5,1077.2 L2571.6,1077.2 L2578.8,1192.0 L2585.9,1000.7 L2593.1,1000.7 L2600.2,1039.0 L2607.4,1077.2 L2614.5,1077.2 L2621.7,1000.7 L2628.8,1077.2 L2636.0,1077.2 L2643.1,1000.7 L2650.2,1077.2 L2657.4,1077.2 L2664.5,1077.2 L2671.7,1039.0 L2678.8,1000.7 L2686.0,1039.0 L2693.1,1115.5 L2700.3,962.5 M2721.7,1077.2 L2728.9,962.5 L2736.0,1115.5 L2743.2,1077.2 L2750.3,1077.2 L2757.5,1077.2 L2764.6,1077.2 L2771.7,1077.2 L2778.9,1077.2 L2786.0,1077.2 L2793.2,1077.2 L2800.3,1077.2 L2807.5,1077.2 L2814.6,1077.2 L2821.8,1077.2 L2828.9,924.2 L2836.1,962.5 L2843.2,1000.7 L2850.4,1039.0 L2857.5,1077.2 L2864.7,1077.2 L2871.8,1077.2 L2879.0,1077.2" stroke="#5783f3"/></g><rect x="2137" y="829" width="776.4" height="400" fill="none" stroke="#cdcdcd" stroke-width="2"/><text x="2524.7" y="812.2" font-size="23.5" font-family="Liberation Sans, sans-serif" fill="#fff" stroke="#fff" stroke-width="0.5" text-anchor="middle" textLength="63.8" lengthAdjust="spacingAndGlyphs">Goals</text><text x="2108.3" y="1011.3" font-size="22.4" font-family="Liberation Sans, sans-serif" fill="#fff" stroke="#fff" stroke-width="0.5" text-anchor="middle" textLength="14" lengthAdjust="spacingAndGlyphs" transform="rotate(-25 2108.3 1011.3)">8</text><text x="2100.9" y="937.8" font-size="22.4" font-family="Liberation Sans, sans-serif" fill="#fff" stroke="#fff" stroke-width="0.5" text-anchor="middle" textLength="28" lengthAdjust="spacingAndGlyphs" transform="rotate(-25 2100.9 937.8)">10</text><text x="2100.9" y="861.3" font-size="22.4" font-family="Liberation Sans, sans-serif" fill="#fff" stroke="#fff" stroke-width="0.5" text-anchor="middle" textLength="28" lengthAdjust="spacingAndGlyphs" transform="rotate(-25 2100.9 861.3)">12</text></svg>
<div class="hl" style="left:22px;top:1039px;width:1428px;height:2px;"></div>
<div class="hl" style="left:1574px;top:1039px;width:1428px;height:2px;"></div>
<span class="t" style="left:1468.00px;top:1025.70px;font-size:26px;line-height:34px;color:#fff;transform:scaleX(1.0248);">Journal</span>
<div style="left:22.4px;top:1070.5px;width:1439.1px;height:55px;background:#1e1e1e;border-radius:6px;box-shadow:0 0 0 0.5px #2b2b2b;"></div><div style="left:1420.5px;top:1072px;width:39.5px;height:52px;background:linear-gradient(#464646,#3c3c3c);border:2px solid #5a5a5a;border-top-color:#606060;border-bottom-color:#555;border-left:none;border-radius:0 5px 5px 0;"></div><div class="tri" style="left:1431.0px;top:1094.0px;border-width:8px 8.0px 0 8.0px;border-color:#1c1c1c transparent transparent transparent;"></div><span class="t" style="left:30.20px;top:1081.00px;font-size:26px;line-height:34px;color:#fff;transform:scaleX(1.0138);">11/4/22</span>
<div style="left:1474px;top:1082px;width:32px;height:32px;border-radius:50%;background:#414141;"></div><div style="left:1487.8px;top:1087.8px;width:4.4px;height:4.4px;border-radius:50%;background:#e6e6e6;"></div><div style="left:1488.3px;top:1094px;width:3.4px;height:14.3px;background:#e4e4e4;"></div>
<div style="left:1518px;top:1070.5px;width:1483.5px;height:55px;background:#1e1e1e;border-radius:6px;box-shadow:0 0 0 0.5px #2b2b2b;"></div><div style="left:2960.5px;top:1072px;width:39.5px;height:52px;background:linear-gradient(#464646,#3c3c3c);border:2px solid #5a5a5a;border-top-color:#606060;border-bottom-color:#555;border-left:none;border-radius:0 5px 5px 0;"></div><div class="tri" style="left:2971.0px;top:1094.0px;border-width:8px 8.0px 0 8.0px;border-color:#1c1c1c transparent transparent transparent;"></div><span class="t" style="left:1527.00px;top:1081.00px;font-size:26px;line-height:34px;color:#fff;transform:scaleX(1.0305);">9/19/22</span>
<div style="left:22.5px;top:1138px;width:1482.5px;height:742.5px;background:#1e1e1e;border:1.5px solid #292929;border-top:2px solid #2e2e2e;"></div>
<span class="t" style="left:31.70px;top:1147.00px;font-size:26px;line-height:34px;color:#e2e2e2;transform:scaleX(1.052);">Day is going well... Not sure what I should do tonight</span>
<div class="btn" style="left:24px;top:1896px;width:1480px;height:44px;"></div>
<span class="t" style="left:687.20px;top:1901.30px;font-size:26px;line-height:34px;color:#e4e4e4;transform:scaleX(1.0294);-webkit-text-stroke:0.5px;">Submit Entry</span>
<div class="btn" style="left:1520px;top:1140px;width:1480px;height:44px;"></div>
<span class="t" style="left:2189.15px;top:1146.00px;font-size:26px;line-height:34px;color:#e4e4e4;transform:scaleX(1.0171);-webkit-text-stroke:0.5px;">Find Entries</span>
<div style="left:1518px;top:1198px;width:1483px;height:743px;border:1px solid #292929;background:#323232;"></div>
<div style="left:1522px;top:1208px;width:1477px;height:732px;border:2px solid #404040;background:#313131;"></div>
<span class="t" style="left:1544.20px;top:1230.00px;font-size:26px;line-height:34px;color:#fff;transform:scaleX(1.0518);">15:54 - Today has gone pretty well. I have been super productive and also enjoying myself. I think I am goin-</span>
<span class="t" style="left:1544.20px;top:1262.20px;font-size:26px;line-height:34px;color:#fff;transform:scaleX(1.0542);">g to try and go on a long walk tonight.</span>
<span class="t" style="left:1544.20px;top:1305.90px;font-size:26px;line-height:34px;color:#fff;transform:scaleX(1.0502);">15:55 - Josy texted me. Haven't heard from her in a while. glad she is doing well</span>
</div></body></html>
